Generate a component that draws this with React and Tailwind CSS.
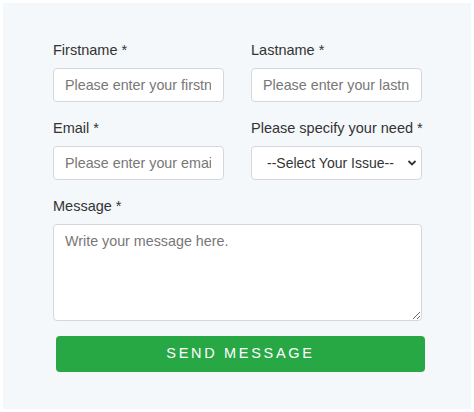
import React from 'react';

function Field({ label, children }) {
    return (
        <div className="flex flex-col">
            <label className="mb-2 h-5 whitespace-nowrap text-[14.5px] leading-5 text-[#333]">{label}</label>
            {children}
        </div>
    );
}

const inputCls =
    'h-[34px] w-full rounded-[4px] border border-[#d4d8dc] bg-white pl-[11px] pr-[12px] text-[14.3px] text-[#333] placeholder:text-[#777] outline-none';

export default function App() {
    return (
        <div className="h-[412px] w-[474px] bg-white p-[3px]" style={{ fontFamily: '"Liberation Sans", Arial, sans-serif' }}>
            <div className="h-full w-full bg-[#f5f8fa] pl-[50px] pr-[49px] pt-[37px]">
                <div className="grid grid-cols-2 gap-x-[27px] gap-y-4">
                    <Field label="Firstname *">
                        <input className={inputCls} type="text" placeholder="Please enter your firstname" />
                    </Field>
                    <Field label="Lastname *">
                        <input className={inputCls} type="text" placeholder="Please enter your lastname" />
                    </Field>
                    <Field label="Email *">
                        <input className={inputCls} type="email" placeholder="Please enter your email" />
                    </Field>
                    <Field label="Please specify your need *">
                        <div className="relative">
                            <select className="h-[34px] w-full appearance-none rounded-[4px] border border-[#d4d8dc] bg-white pl-[15px] text-[14px] text-[#333] outline-none">
                                <option>--Select Your Issue--</option>
                                <option>Request Invoice</option>
                                <option>Other</option>
                            </select>
                            <svg className="pointer-events-none absolute right-[5px] top-[13px]" width="10" height="8" viewBox="0 0 10 8">
                                <path d="M1.5 2 L5 5.5 L8.5 2" fill="none" stroke="#333" strokeWidth="1.8" />
                            </svg>
                        </div>
                    </Field>
                    <div className="col-span-2">
                        <Field label="Message *">
                            <textarea
                                className="block h-[97px] w-full rounded-[4px] border border-[#d4d8dc] bg-white px-[11px] py-[6px] text-[14.3px] text-[#333] placeholder:text-[#777] outline-none"
                                placeholder="Write your message here."
                            />
                        </Field>
                    </div>
                </div>
                <button className="ml-[3px] mt-[15px] h-[36px] w-[369px] rounded-[4px] bg-[#28a745] text-[14.5px] tracking-[2.7px] text-white">
                    SEND MESSAGE
                </button>
            </div>
        </div>
    );
}
